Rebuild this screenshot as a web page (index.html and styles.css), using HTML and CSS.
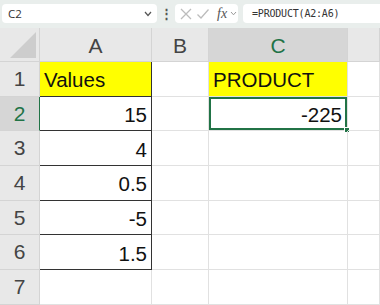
FILE: index.html
```
<!DOCTYPE html>
<html>
<head>
<meta charset="utf-8">
<link rel="stylesheet" href="styles.css">
</head>
<body>
<div class="toolbar">
  <div class="namebox">
    <span class="ref">C2</span>
    <svg class="chev" width="8" height="6" viewBox="0 0 8 6"><polyline points="1,1 4,4.5 7,1" fill="none" stroke="#555" stroke-width="1.2"/></svg>
  </div>
  <div class="dots">⋮</div>
  <div class="fnbox">
    <svg width="14" height="14" viewBox="0 0 14 14"><path d="M2 2 L12 12 M12 2 L2 12" stroke="#bcbcbc" stroke-width="1.3" fill="none"/></svg>
    <svg width="14" height="14" viewBox="0 0 14 14"><path d="M1.5 7.5 L5 11 L12.5 2.5" stroke="#bcbcbc" stroke-width="1.3" fill="none"/></svg>
    <span class="fx">fx</span>
    <svg width="7" height="5" viewBox="0 0 7 5"><polyline points="1,1 3.5,3.8 6,1" fill="none" stroke="#999" stroke-width="1"/></svg>
  </div>
  <div class="formula">=PRODUCT(A2:A6)</div>
</div>
<div class="sheet">
  <div class="corner"><div class="tri"></div></div>
  <div class="ch">A</div>
  <div class="ch">B</div>
  <div class="ch sel">C</div>
  <div class="ch"></div>

  <div class="rh">1</div>
  <div class="c a yellow">Values</div>
  <div class="c"></div>
  <div class="c yellow">PRODUCT</div>
  <div class="c"></div>

  <div class="rh sel">2</div>
  <div class="c a num">15</div>
  <div class="c"></div>
  <div class="c num active">-225<span class="handle"></span></div>
  <div class="c"></div>

  <div class="rh">3</div>
  <div class="c a num">4</div>
  <div class="c"></div>
  <div class="c"></div>
  <div class="c"></div>

  <div class="rh">4</div>
  <div class="c a num">0.5</div>
  <div class="c"></div>
  <div class="c"></div>
  <div class="c"></div>

  <div class="rh">5</div>
  <div class="c a num">-5</div>
  <div class="c"></div>
  <div class="c"></div>
  <div class="c"></div>

  <div class="rh">6</div>
  <div class="c a num">1.5</div>
  <div class="c"></div>
  <div class="c"></div>
  <div class="c"></div>

  <div class="rh">7</div>
  <div class="c"></div>
  <div class="c"></div>
  <div class="c"></div>
  <div class="c"></div>
</div>
</body>
</html>
```
FILE: styles.css
```
* { box-sizing: border-box; }
html, body { margin: 0; padding: 0; }
body {
  width: 380px;
  height: 305px;
  overflow: hidden;
  background: #ffffff;
  font-family: "Liberation Sans", Arial, sans-serif;
}
.toolbar {
  height: 28px;
  background: #e9eeec;
  display: flex;
  align-items: flex-start;
  padding: 4px 0 0 2px;
}
.namebox {
  width: 155px;
  height: 19px;
  background: #fff;
  border-radius: 4px;
  display: flex;
  align-items: center;
  justify-content: space-between;
  padding: 0 5px 0 6px;
}
.ref {
  font-family: "Open Sans", sans-serif;
  font-size: 11.5px;
  color: #333;
}
.dots {
  width: 18px;
  height: 19px;
  text-align: center;
  line-height: 19px;
  font-size: 13px;
  color: #555;
  font-weight: bold;
}
.fnbox {
  width: 63px;
  height: 19px;
  background: #fff;
  border-radius: 4px;
  display: flex;
  align-items: center;
  padding: 0 0 0 4px;
  gap: 3px;
}
.fx {
  font-family: "Liberation Serif", serif;
  font-style: italic;
  font-size: 14px;
  color: #555;
  margin-left: 4px;
}
.formula {
  flex: 1;
  height: 19px;
  margin-left: 5px;
  background: #fff;
  border-radius: 4px 0 0 4px;
  font-family: "DejaVu Sans Mono", monospace;
  font-size: 10px;
  letter-spacing: -0.2px;
  line-height: 19px;
  padding-left: 9px;
  color: #333;
}
.sheet {
  display: grid;
  grid-template-columns: 40px 112px 57px 139px 1fr;
  grid-template-rows: 34px repeat(7, 34.7px);
}
.corner {
  background: #e8e8e8;
  border-right: 1px solid #d4d4d4;
  border-bottom: 1px solid #d4d4d4;
  display: flex;
  align-items: flex-end;
  justify-content: flex-end;
  padding: 0 3px 3px 0;
}
.tri {
  width: 0;
  height: 0;
  border-left: 26px solid transparent;
  border-bottom: 26px solid #cdcdcd;
}
.ch {
  background: #e8e8e8;
  border-right: 1px solid #d4d4d4;
  border-bottom: 1px solid #d4d4d4;
  font-size: 21px;
  color: #444;
  display: flex;
  align-items: center;
  justify-content: center;
  padding-top: 3px;
}
.ch.sel {
  background: #d6d6d6;
  color: #217346;
}
.rh {
  background: #e8e8e8;
  border-right: 1px solid #d4d4d4;
  border-bottom: 1px solid #d4d4d4;
  font-size: 21px;
  color: #444;
  display: flex;
  align-items: center;
  justify-content: center;
}
.rh.sel {
  background: #d6d6d6;
  color: #217346;
  border-right: 1px solid #217346;
}
.c {
  border-right: 1px solid #e1e1e1;
  border-bottom: 1px solid #e1e1e1;
  font-size: 20.5px;
  color: #111;
  display: flex;
  align-items: center;
  padding: 3px 4px 0 4px;
  position: relative;
}
.c.a {
  border-right: 1px solid #333;
  border-bottom: 1px solid #333;
}
.yellow {
  background: #ffff00;
}
.num {
  justify-content: flex-end;
}
.active {
  box-shadow: inset 0 0 0 2px #217346;
  padding-right: 5px;
}
.handle {
  position: absolute;
  right: -3px;
  bottom: -3px;
  width: 6px;
  height: 6px;
  background: #217346;
  border: 1px solid #fff;
}
```
